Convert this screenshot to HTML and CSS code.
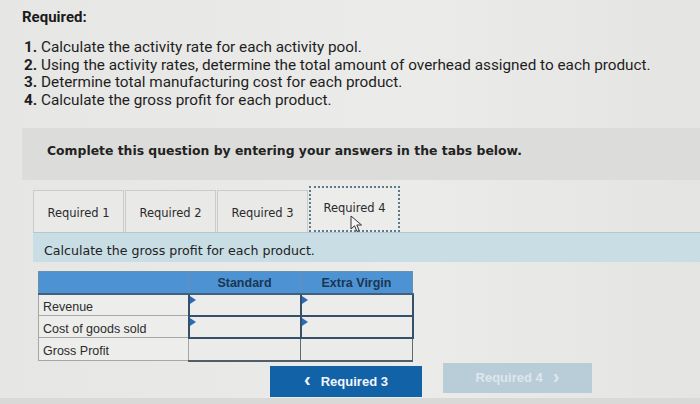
FILE: index.html
```html
<!DOCTYPE html>
<html>
<head>
<meta charset="utf-8">
<link rel="stylesheet" href="styles.css">
</head>
<body>
<div class="page">
  <section class="req">
    <div class="req-title">Required:</div>
    <ol class="req-list">
      <li><b>1.</b> Calculate the activity rate for each activity pool.</li>
      <li><b>2.</b> Using the activity rates, determine the total amount of overhead assigned to each product.</li>
      <li><b>3.</b> Determine total manufacturing cost for each product.</li>
      <li><b>4.</b> Calculate the gross profit for each product.</li>
    </ol>
  </section>
  <div class="band">Complete this question by entering your answers in the tabs below.</div>
  <div class="tabs">
    <div class="tab">Required 1</div>
    <div class="tab">Required 2</div>
    <div class="tab">Required 3</div>
    <div class="tab active">Required 4
      <svg class="cursor" width="14" height="18" viewBox="0 0 14 18"><path d="M1 1 L1 14 L4.5 10.8 L7 16.5 L9.2 15.5 L6.8 10 L11.5 10 Z" fill="#f4f4f4" stroke="#333" stroke-width="1"/></svg>
    </div>
  </div>
  <div class="instr">Calculate the gross profit for each product.</div>
  <div class="work">
    <table class="grid">
      <tr class="head"><th class="lbl"></th><th>Standard</th><th>Extra Virgin</th></tr>
      <tr><td class="lbl">Revenue</td><td class="inp"><span class="tri"></span></td><td class="inp"><span class="tri"></span></td></tr>
      <tr><td class="lbl">Cost of goods sold</td><td class="inp"><span class="tri"></span></td><td class="inp"><span class="tri"></span></td></tr>
      <tr><td class="lbl">Gross Profit</td><td class="out"></td><td class="out"></td></tr>
    </table>
    <div class="nav">
      <div class="btn prev"><span class="chev">&#x2039;</span> Required 3</div>
      <div class="btn next">Required 4 <span class="chev">&#x203A;</span></div>
    </div>
  </div>
  <div class="foot"></div>
</div>
</body>
</html>
```
FILE: styles.css
```css
html, body { margin: 0; padding: 0; }
body {
  width: 700px; height: 404px; overflow: hidden;
  background: #e7e7e5;
  font-family: Roboto, "Liberation Sans", sans-serif;
  color: #1e1e1e;
}
.page { width: 700px; height: 404px; display: flex; flex-direction: column; background: linear-gradient(90deg, #e6e6e4, #ebebe9 60%, #e4e4e2); }
.req { padding: 8px 0 0 22px; height: 120px; box-sizing: border-box; }
.req-title { font-weight: bold; font-size: 15px; line-height: 18px; color: #1a1a1a; }
.req-list { list-style: none; margin: 13px 0 0 2px; padding: 0; font-size: 15.3px; line-height: 17.7px; letter-spacing: 0; }
.req-list b { font-weight: bold; }
.band {
  margin: 8px 0 0 22px; height: 52px; box-sizing: border-box;
  background: #dcdcda; padding: 15px 0 0 25px;
  font-family: "DejaVu Sans", Verdana, sans-serif; font-weight: bold; font-size: 12.4px; color: #222;
}
.tabs { display: flex; margin: 6px 0 0 33px; height: 46px; align-items: flex-end; }
.tab {
  width: 91px; height: 42px; box-sizing: border-box; border: 1px solid #cbcbc9; border-bottom: none;
  background: #e9e9e7; display: flex; align-items: center; justify-content: center; padding-top: 2px;
  font-family: "DejaVu Sans", Verdana, sans-serif; font-size: 11.5px; color: #2a2a2a; margin-right: 1px;
}
.tab.active { height: 46px; border: 2px dotted #5a7a90; border-bottom: 2px dotted #5a7a90; position: relative; padding: 0 0 2px; background: #ececea; }
.cursor { position: absolute; left: 39px; top: 27px; }
.instr {
  margin-left: 33px; height: 30px; box-sizing: border-box; background: #c9dde4; border-top: 1px solid #b7c6cc;
  padding: 10px 0 0 11px; font-family: "DejaVu Sans", Verdana, sans-serif; font-size: 12.6px; color: #222;
}
.work { flex: 1; padding: 9px 0 0 38px; }
.grid { border-collapse: collapse; font-family: "Liberation Sans", Arial, sans-serif; font-size: 12.5px; }
.grid td, .grid th { padding: 0; box-sizing: border-box; }
.grid .head th { background: #4d93d3; height: 22px; padding-top: 2px; color: #1c3553; font-weight: bold; font-size: 12.5px; text-align: center; border: 1px solid #6c8fae; border-bottom: 2px solid #40607c; }
.grid .lbl { width: 150px; padding: 4px 0 0 4px; text-align: left; height: 22px; background: #ededeb; border: 1px solid #a6a6a4; color: #2b2b2b; }
.grid .head th.lbl { background: #4d93d3; }
.grid tr:last-child td { height: 23px; }
.grid th:not(.lbl), .grid td.inp, .grid td.out { width: 112px; }
.grid td.inp { border: 2px solid #35506a; background: #ececea; position: relative; vertical-align: top; }
.grid td.out { border: 1px solid #5a6b7a; border-bottom: 2px solid #4f5e6b; background: #ebebe9; }
.tri { display: block; width: 0; height: 0; border-top: 4px solid transparent; border-bottom: 4px solid transparent; border-left: 6px solid #2c6cb3; margin: 1px 0 0 0; }
.nav { display: flex; gap: 21px; margin: 4px 0 0 232px; }
.btn { height: 31px; box-sizing: border-box; display: flex; align-items: center; justify-content: center; font-family: "Liberation Sans", Arial, sans-serif; font-weight: bold; font-size: 13px; }
.btn.prev { width: 152px; background: #1262a8; color: #f2f6fa; }
.btn.next { width: 149px; height: 30px; background: #b9cdd8; color: #dde7ed; margin-top: -3px; }
.chev { font-size: 20px; font-weight: bold; margin: -3px 10px 0 0; }
.btn.next .chev { margin: -3px 0 0 10px; }
.foot { height: 6px; background: #d9d9d7; }
```
